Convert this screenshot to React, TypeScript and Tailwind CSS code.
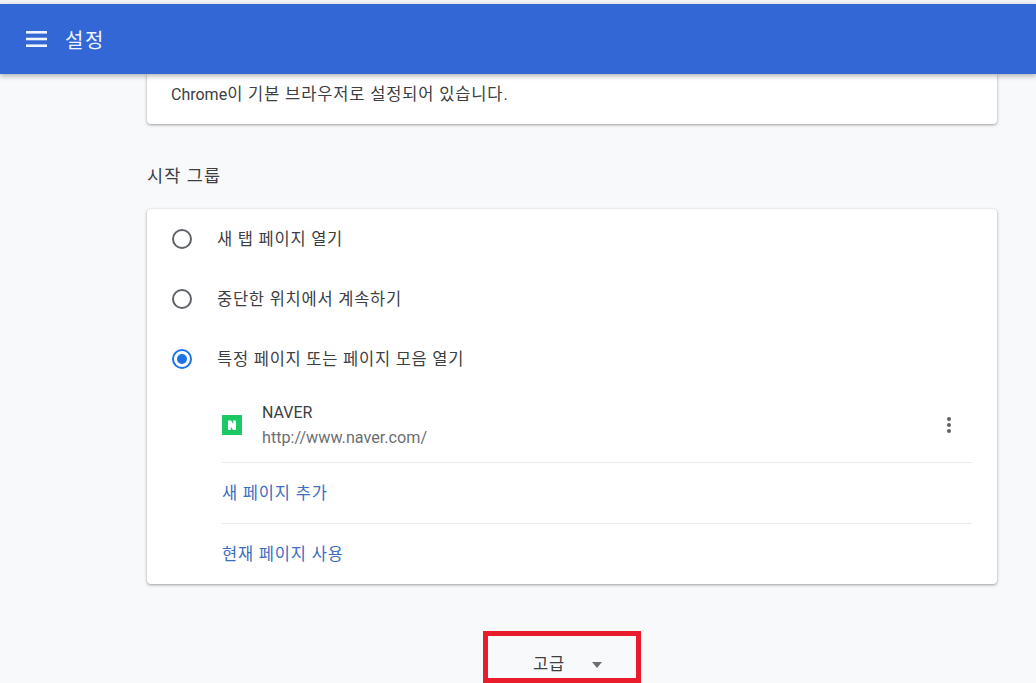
const font = "font-['Roboto','Noto_Sans_CJK_KR',sans-serif]";

function Radio({ checked }: { checked?: boolean }) {
  return (
    <span
      className={
        checked
          ? "flex size-[20px] shrink-0 items-center justify-center rounded-full border-2 border-[#1a73e8]"
          : "flex size-[20px] shrink-0 items-center justify-center rounded-full border-2 border-[#5f6368]"
      }
    >
      {checked && <span className="size-[10px] rounded-full bg-[#1a73e8]" />}
    </span>
  );
}

function RadioRow({ label, checked }: { label: string; checked?: boolean }) {
  return (
    <div className="flex h-[60px] items-center gap-[25px] pl-[25px]">
      <Radio checked={checked} />
      <span className="mt-[3px] text-[16.5px] tracking-[0.75px] text-[#3c4043]">{label}</span>
    </div>
  );
}

export default function App() {
  return (
    <div className={`flex h-[683px] w-[1036px] flex-col overflow-hidden bg-[#f8f9fa] ${font}`}>
      <div className="h-[4px] shrink-0 bg-[#f1f3f4]" />

      {/* Header */}
      <header className="relative z-10 flex h-[70px] shrink-0 items-center gap-[17px] bg-[#3367d6] pl-[26px] shadow-[0_2px_5px_rgba(60,64,67,0.4)]">
        <svg width="22" height="16" viewBox="0 0 22 16" fill="#eef3fc">
          <rect y="0" width="21" height="2.6" />
          <rect y="6.7" width="21" height="2.6" />
          <rect y="13.4" width="21" height="2.6" />
        </svg>
        <h1 className="mt-[3px] text-[20px] font-normal tracking-[1.5px] text-[#f1f5fd]">설정</h1>
      </header>

      <main className="flex flex-1 flex-col pl-[147px] pr-[39px]">
        {/* Default browser card, scrolled under the header */}
        <div className="flex h-[50px] shrink-0 items-start rounded-b-[4px] bg-white pl-[24px] pt-[10px] shadow-[0_1px_3px_rgba(60,64,67,0.5)]">
          <span className="text-[16px] leading-[22px] text-[#3c4043]">
            Chrome<span className="text-[16.5px] tracking-[0.85px]">이 기본 브라우저로 설정되어 있습니다.</span>
          </span>
        </div>

        <h2 className="mt-[40px] h-[45px] shrink-0 text-[17.5px] font-normal leading-[24px] tracking-[1.1px] text-[#3c4043]">
          시작 그룹
        </h2>

        {/* Startup card */}
        <section className="shrink-0 rounded-[4px] bg-white shadow-[0_1px_3px_rgba(60,64,67,0.5)]">
          <RadioRow label="새 탭 페이지 열기" />
          <RadioRow label="중단한 위치에서 계속하기" />
          <RadioRow label="특정 페이지 또는 페이지 모음 열기" checked />

          <div className="ml-[75px] mr-[25px]">
            <div className="flex h-[74px] items-center border-b border-[#e8eaed]">
              <svg width="20" height="20" viewBox="0 0 20 20" className="shrink-0 -translate-y-[1px]">
                <rect width="20" height="20" fill="#1cc862" />
                <path d="M6 5.5h3l2.2 3.4V5.5H14V15h-3L8.8 11.6V15H6z" fill="#fff" />
              </svg>
              <div className="ml-[20px] flex flex-1 flex-col">
                <span className="text-[16px] leading-[24px] text-[#3c4043]">NAVER</span>
                <span className="text-[16.2px] leading-[25px] text-[#6b6f74]">http://www.naver.com/</span>
              </div>
              <svg width="6" height="18" viewBox="0 0 6 18" fill="#5f6368" className="mr-[20px] shrink-0 -translate-y-[1px]">
                <circle cx="3" cy="3" r="2" />
                <circle cx="3" cy="9" r="2" />
                <circle cx="3" cy="15" r="2" />
              </svg>
            </div>
            <div className="flex h-[61px] items-center border-b border-[#e8eaed] pt-[2px] text-[16.5px] tracking-[0.8px] text-[#3d6dbf]">
              새 페이지 추가
            </div>
            <div className="flex h-[60px] items-center pt-[2px] text-[16.5px] tracking-[0.8px] text-[#3d6dbf]">
              현재 페이지 사용
            </div>
          </div>
        </section>

        {/* Advanced toggle, boxed in red in the screenshot */}
        <div className="ml-[336px] mt-[47px] flex h-[52px] w-[158px] shrink-0 items-start self-start border-[5px] border-[#e81c2a] pl-[45px] pt-[18px]">
          <span className="text-[16.5px] leading-[22px] tracking-[0.8px] text-[#3c4043]">고급</span>
          <span className="ml-[27px] mt-[8px] size-0 border-x-[5.5px] border-t-[6px] border-x-transparent border-t-[#6b6f74]" />
        </div>
      </main>
    </div>
  );
}
